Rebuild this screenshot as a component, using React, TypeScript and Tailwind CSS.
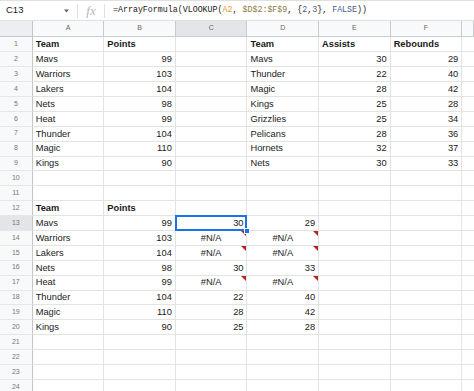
import React from 'react';

type Val = string | number | null;

const ROWS: Val[][] = [
    ['Team', 'Points', null, 'Team', 'Assists', 'Rebounds'],
    ['Mavs', 99, null, 'Mavs', 30, 29],
    ['Warriors', 103, null, 'Thunder', 22, 40],
    ['Lakers', 104, null, 'Magic', 28, 42],
    ['Nets', 98, null, 'Kings', 25, 28],
    ['Heat', 99, null, 'Grizzlies', 25, 34],
    ['Thunder', 104, null, 'Pelicans', 28, 36],
    ['Magic', 110, null, 'Hornets', 32, 37],
    ['Kings', 90, null, 'Nets', 30, 33],
    [null, null, null, null, null, null],
    [null, null, null, null, null, null],
    ['Team', 'Points', null, null, null, null],
    ['Mavs', 99, 30, 29, null, null],
    ['Warriors', 103, '#N/A', '#N/A', null, null],
    ['Lakers', 104, '#N/A', '#N/A', null, null],
    ['Nets', 98, 30, 33, null, null],
    ['Heat', 99, '#N/A', '#N/A', null, null],
    ['Thunder', 104, 22, 40, null, null],
    ['Magic', 110, 28, 42, null, null],
    ['Kings', 90, 25, 28, null, null],
    [null, null, null, null, null, null],
    [null, null, null, null, null, null],
    [null, null, null, null, null, null],
    [null, null, null, null, null, null],
];

const LETTERS = ['A', 'B', 'C', 'D', 'E', 'F', ''];

function DataCell({ value, bold, selected }: { value: Val; bold: boolean; selected: boolean }) {
    const isErr = value === '#N/A';
    const isNum = typeof value === 'number';
    return (
        <div
            className={`relative h-[14.9px] border-r border-b border-[#e2e3e3] flex items-center overflow-visible whitespace-nowrap ${
                isNum ? 'justify-end pr-[3px]' : isErr ? 'justify-center' : 'pl-[3px]'
            } ${bold ? 'font-bold' : ''}`}
        >
            <span className="leading-none pt-[1px]">{value}</span>
            {isErr && (
                <span className="absolute right-0 top-0 w-0 h-0 border-t-[5px] border-l-[5px] border-t-[#b3261e] border-l-transparent" />
            )}
            {selected && (
                <>
                    <span className="absolute -left-[1px] -top-[1px] right-[-1px] bottom-[-1px] border-2 border-[#1a73e8] z-10" />
                    <span className="absolute right-[-4px] bottom-[-4px] w-[6px] h-[6px] bg-[#1a73e8] border border-white z-20" />
                </>
            )}
        </div>
    );
}

export default function App() {
    return (
        <div className="w-[474px] h-[391px] overflow-hidden bg-white text-[#1a1a1a] font-['Liberation_Sans',Arial,sans-serif]">
            <div className="h-[21px] flex items-center border-t border-b border-[#e0e0e0] text-[9.5px]">
                <div className="w-[77px] flex items-center justify-between pl-[6px] pr-[8px]">
                    <span>C13</span>
                    <svg width="5" height="4" viewBox="0 0 5 4">
                        <path d="M0 0.5 L5 0.5 L2.5 3.5 Z" fill="#5f6368" />
                    </svg>
                </div>
                <div className="w-px h-[14px] bg-[#e0e0e0]" />
                <div className="w-[26px] flex justify-center text-[#b8b8b8] italic text-[13px] font-['Liberation_Serif',serif] leading-none">
                    fx
                </div>
                <div className="w-px h-[14px] bg-[#e0e0e0]" />
                <div className="pl-[8px] font-['Liberation_Mono',monospace] text-[8.3px] whitespace-nowrap">
                    =ArrayFormula(VLOOKUP(<span className="text-[#e39a2e]">A2</span>,{' '}
                    <span className="text-[#8a7a3e]">$D$2:$F$9</span>, {'{'}
                    <span className="text-[#4a5a8c]">2</span>,<span className="text-[#4a5a8c]">3</span>
                    {'}'}, <span className="text-[#4a5a8c]">FALSE</span>))
                </div>
            </div>

            <div className="grid grid-cols-[32.7px_repeat(6,71.6px)_1fr] text-[9.3px]">
                <div className="h-[16.4px] bg-[#eceef1] border-r border-b border-[#c4c7c5]" />
                {LETTERS.map((l, i) => (
                    <div
                        key={i}
                        className={`h-[16.4px] flex items-center justify-center text-[7px] text-[#666] border-r border-b border-[#c9cccf] ${
                            l === 'C' ? 'bg-[#e3e5e8]' : 'bg-[#f8f9fa]'
                        }`}
                    >
                        {l}
                    </div>
                ))}

                {ROWS.map((row, r) => (
                    <React.Fragment key={r}>
                        <div
                            className={`h-[14.9px] flex items-center justify-center text-[7px] text-[#777] border-r border-r-[#c4c7c5] border-b border-b-[#e6e6e6] ${
                                r === 12 ? 'bg-[#e3e5e8]' : 'bg-[#f8f9fa]'
                            }`}
                        >
                            {r + 1}
                        </div>
                        {row.map((v, c) => (
                            <DataCell key={c} value={v} bold={r === 0 || r === 11} selected={r === 12 && c === 2} />
                        ))}
                        <div className="h-[14.9px] border-b border-[#e2e3e3]" />
                    </React.Fragment>
                ))}
            </div>
        </div>
    );
}
